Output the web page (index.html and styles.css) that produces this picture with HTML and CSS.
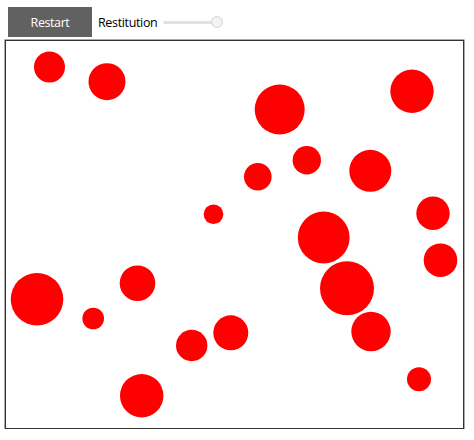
FILE: index.html
```html
<!DOCTYPE html>
<html>
<head>
<meta charset="utf-8">
<link rel="stylesheet" href="styles.css">
</head>
<body>
<div class="toolbar">
  <button class="restart">Restart</button>
  <label class="label">Restitution</label>
  <div class="slider"><div class="track"></div><div class="thumb"></div></div>
</div>
<div class="stage">
  <svg class="balls" width="457" height="387" viewBox="6 41 457 387">
    <g fill="#ff0000">
      <circle cx="49.5" cy="67" r="15.5"/>
      <circle cx="107" cy="81.7" r="18.5"/>
      <circle cx="213.5" cy="214.3" r="9.8"/>
      <circle cx="279.7" cy="109.5" r="25"/>
      <circle cx="412" cy="91.3" r="21.7"/>
      <circle cx="306.8" cy="160.3" r="14.2"/>
      <circle cx="257.8" cy="176.8" r="13.8"/>
      <circle cx="370.3" cy="170.8" r="21"/>
      <circle cx="433" cy="213.3" r="16.7"/>
      <circle cx="323.7" cy="237.5" r="25.9"/>
      <circle cx="37" cy="299.2" r="26.3"/>
      <circle cx="93.2" cy="318.5" r="10.8"/>
      <circle cx="137.5" cy="283.2" r="17.8"/>
      <circle cx="191.7" cy="345.5" r="15.7"/>
      <circle cx="230.8" cy="332.8" r="17.5"/>
      <circle cx="141.7" cy="395.7" r="21.7"/>
      <circle cx="347" cy="288.3" r="27"/>
      <circle cx="440.5" cy="260.2" r="16.8"/>
      <circle cx="371" cy="331.5" r="19.7"/>
      <circle cx="419" cy="379.2" r="12"/>
    </g>
  </svg>
</div>
</body>
</html>
```
FILE: styles.css
```css
html, body {
  margin: 0;
  padding: 0;
  background: #ffffff;
  font-family: "Open Sans", "Noto Sans", sans-serif;
}
.toolbar {
  display: flex;
  align-items: center;
  height: 30px;
  padding: 7px 0 0 8px;
}
.restart {
  width: 84px;
  height: 30px;
  border: none;
  margin: 0;
  padding: 0;
  background: #616161;
  color: #ffffff;
  font-family: "Open Sans", "Noto Sans", sans-serif;
  font-size: 12.5px;
  letter-spacing: -0.4px;
}
.label {
  margin-left: 6px;
  font-size: 12.5px;
  letter-spacing: -0.35px;
  color: #000000;
}
.slider {
  position: relative;
  width: 60px;
  height: 12px;
  margin-left: 6px;
}
.track {
  position: absolute;
  left: 0;
  right: 4px;
  top: 5px;
  height: 3px;
  background: #e2e2e2;
  border-radius: 2px;
}
.thumb {
  position: absolute;
  right: 0;
  top: 0;
  width: 10px;
  height: 10px;
  border-radius: 50%;
  background: #f3f3f3;
  border: 1px solid #d6d6d6;
}
.stage {
  margin: 3px 0 0 5px;
  width: 457px;
  height: 387px;
  border: 1px solid #333333;
  box-shadow: 0 0 0 0.5px #555555;
}
.balls {
  display: block;
}
```
